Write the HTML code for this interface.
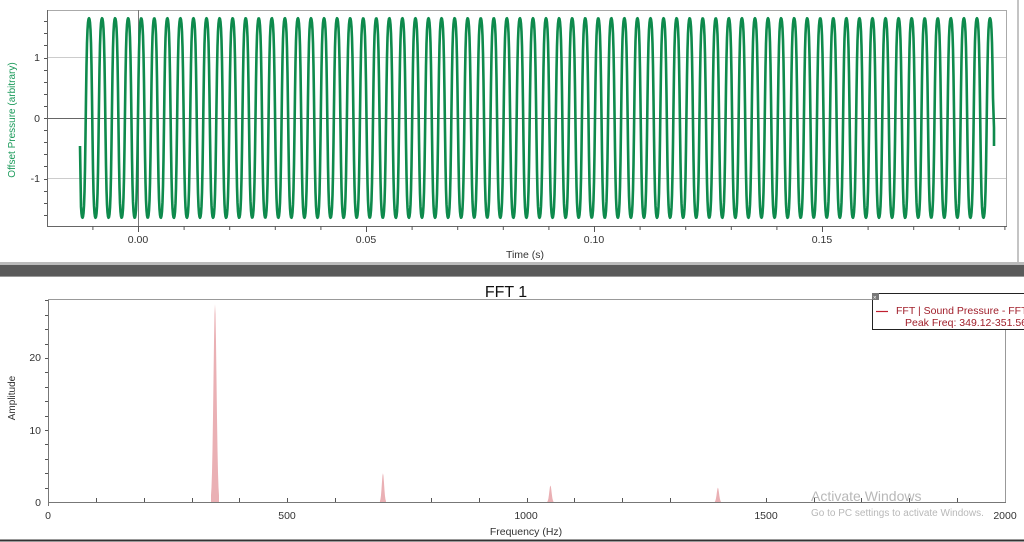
<!DOCTYPE html>
<html><head><meta charset="utf-8"><style>
body{margin:0;width:1024px;height:542px;overflow:hidden;background:#fff;font-family:"Liberation Sans",Arial,sans-serif}
svg{display:block}
</style></head><body>
<svg width="1024" height="542" xmlns="http://www.w3.org/2000/svg" font-family="Liberation Sans, Arial, sans-serif">
<rect width="1024" height="542" fill="#fff"/>
<line x1="1018" y1="0" x2="1018" y2="263" stroke="#888"/>
<rect x="0" y="262" width="1024" height="3" fill="#bbb"/>
<rect x="0" y="265" width="1024" height="11" fill="#5a5a5a"/>
<rect x="0" y="276" width="1024" height="1" fill="#999"/>
<rect x="47.5" y="10.5" width="959" height="216" fill="none" stroke="#aaa"/>
<line x1="47" y1="57.5" x2="1006" y2="57.5" stroke="#ccc"/>
<line x1="47" y1="178.5" x2="1006" y2="178.5" stroke="#ccc"/>
<line x1="47" y1="118.5" x2="1006" y2="118.5" stroke="#666"/>
<line x1="138.5" y1="10" x2="138.5" y2="230" stroke="#777"/>
<line x1="47.5" y1="10" x2="47.5" y2="226" stroke="#666"/>
<line x1="47" y1="226.5" x2="1007" y2="226.5" stroke="#666"/>
<g id="tt" stroke="#555"></g>
<g font-size="10.5" fill="#333">
<text x="40" y="61" text-anchor="end">1</text>
<text x="40" y="122" text-anchor="end">0</text>
<text x="40" y="182" text-anchor="end">-1</text>
<text x="138" y="243" text-anchor="middle">0.00</text>
<text x="366" y="243" text-anchor="middle">0.05</text>
<text x="594" y="243" text-anchor="middle">0.10</text>
<text x="822" y="243" text-anchor="middle">0.15</text>
<text x="525" y="258" text-anchor="middle">Time (s)</text>
</g>
<text transform="translate(15,120) rotate(-90)" font-size="10" fill="#1a9a5a" text-anchor="middle">Offset Pressure (arbitrary)</text>
<path id="wave" fill="none" stroke="#0e8a4c" stroke-width="2.6" stroke-linejoin="round"/>
<text x="506" y="297" font-size="16" text-anchor="middle" fill="#111">FFT 1</text>
<line x1="48.5" y1="299" x2="48.5" y2="506" stroke="#777"/>
<line x1="48" y1="299.5" x2="873" y2="299.5" stroke="#999"/>
<line x1="1005.5" y1="329" x2="1005.5" y2="502" stroke="#999"/>
<line x1="48" y1="502.5" x2="1006" y2="502.5" stroke="#777"/>
<g id="bt" stroke="#555"></g>
<g id="peaks" fill="#eab0b4"></g>
<g font-size="10.5" fill="#333">
<text x="41" y="361" text-anchor="end">20</text>
<text x="41" y="434" text-anchor="end">10</text>
<text x="41" y="506" text-anchor="end">0</text>
<text x="48" y="519" text-anchor="middle">0</text>
<text x="287" y="519" text-anchor="middle">500</text>
<text x="526" y="519" text-anchor="middle">1000</text>
<text x="766" y="519" text-anchor="middle">1500</text>
<text x="1005" y="519" text-anchor="middle">2000</text>
<text x="526" y="535" text-anchor="middle">Frequency (Hz)</text>
</g>
<text transform="translate(15,398) rotate(-90)" font-size="10" fill="#333" text-anchor="middle">Amplitude</text>
<text x="811" y="501" font-size="14" fill="#b8b8b8">Activate Windows</text>
<text x="811" y="516" font-size="10" fill="#b8b8b8">Go to PC settings to activate Windows.</text>
<line x1="0" y1="540.5" x2="1024" y2="540.5" stroke="#333" stroke-width="2"/>
<rect x="872.5" y="293.5" width="160" height="36" fill="#fff" stroke="#222"/>
<rect x="872" y="293" width="7" height="7" fill="#777"/>
<text x="873" y="299.5" font-size="6" fill="#fff">×</text>
<line x1="876" y1="311.5" x2="888" y2="311.5" stroke="#c02030" stroke-width="1.2"/>
<text x="896" y="314" font-size="10.5" fill="#a01e2a">FFT | Sound Pressure - FFT</text>
<text x="905" y="326" font-size="10.5" fill="#a01e2a">Peak Freq: 349.12-351.56</text>
</svg>
<script>
var ns="http://www.w3.org/2000/svg";
function ln(g,x1,y1,x2,y2){var l=document.createElementNS(ns,"line");l.setAttribute("x1",x1);l.setAttribute("y1",y1);l.setAttribute("x2",x2);l.setAttribute("y2",y2);document.getElementById(g).appendChild(l);}
for(var i=-1;i<=19;i++){var x=138+i*45.6+0.5;if(x<48||x>1007)continue;ln("tt",x,226,x,i%5==0?232:230);}
for(var v=-1.6;v<=1.61;v+=0.2){var y=Math.round(118-v*60.5)+0.5;ln("tt",44,y,47,y);}
var P=13.058,d="M80 146",K=1.4,T=Math.tanh(K);
for(var x=81;x<=993;x+=0.5){var c=Math.cos(2*Math.PI*(x-89)/P);var v=1.65*Math.tanh(K*c)/T;var y=118-v*60.5;d+="L"+x.toFixed(1)+" "+y.toFixed(1);}
d+="L994 128L994 146";
document.getElementById("wave").setAttribute("d",d);
for(var f=100;f<2000;f+=100){var x=Math.round(48+f*0.4785)+0.5;ln("bt",x,498,x,502);}
for(var a=2;a<=28;a+=2){var y=Math.round(502-a*7.2)+0.5;ln("bt",45,y,48,y);}
function peak(f,h,w){var x=48+f*0.4785,g=document.getElementById("peaks");var p=document.createElementNS(ns,"path");
var s="M"+(x-w)+" 502";for(var k=-w;k<=w;k+=0.5){var yy=502-h*Math.exp(-(k*k)/(2*(w/2.6)*(w/2.6)))*7.2;s+="L"+(x+k)+" "+yy;}s+="L"+(x+w)+" 502Z";p.setAttribute("d",s);g.appendChild(p);}
peak(349,27.5,4);peak(700,4,3);peak(1050,2.3,3);peak(1400,2,3);
</script>
</body></html>
